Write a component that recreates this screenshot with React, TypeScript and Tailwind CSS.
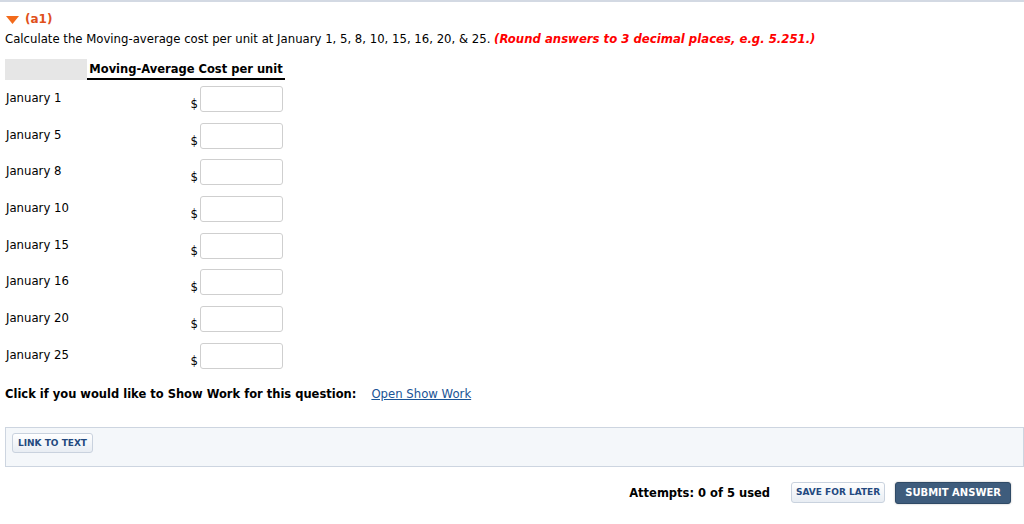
const dates = ['January 1', 'January 5', 'January 8', 'January 10', 'January 15', 'January 16', 'January 20', 'January 25'];

function Row({ label }: { label: string }) {
  return (
    <div className="flex h-[36.7px] items-start">
      <div className="w-[82px] pt-[11px] pl-[1px] text-[11.7px] leading-[14px] text-black">{label}</div>
      <div className="flex flex-1 items-end justify-end pt-[6px] pr-[2px]">
        <span className="mr-[2px] mb-[1px] text-[11.7px] leading-[14px] text-black">$</span>
        <div className="h-[26px] w-[83px] rounded-[3px] border border-[#cfcfcf] bg-white" />
      </div>
    </div>
  );
}

export default function App() {
  return (
    <div className="h-[524px] w-[1024px] overflow-hidden bg-white font-['DejaVu_Sans',Verdana,sans-serif] text-[11.7px] text-black">
      <div className="h-[2px] w-full bg-[#d3d9e3]" />
      <div className="flex items-center pl-[6px] pt-[10px]">
        <svg width="13" height="8" viewBox="0 0 13 8" className="mt-[1px]">
          <polygon points="0,0 13,0 6.5,8" fill="#f26a1b" />
        </svg>
        <span className="ml-[6px] text-[12px] font-bold leading-[14px] text-[#e0501b]">(a1)</span>
      </div>
      <div className="mt-[6px] whitespace-nowrap pl-[5px] text-[11.7px] leading-[14px]">
        Calculate the Moving-average cost per unit at January 1, 5, 8, 10, 15, 16, 20, &amp; 25.{' '}
        <span className="font-bold italic text-[#ff0000]">(Round answers to 3 decimal places, e.g. 5.251.)</span>
      </div>

      <div className="ml-[5px] mt-[13px] w-[280px]">
        <div className="flex h-[21px]">
          <div className="w-[82px] bg-[#e6e6e6]" />
          <div className="flex flex-1 items-center justify-center whitespace-nowrap border-b-2 border-black bg-white text-[11.5px] font-bold leading-[14px]">
            Moving-Average Cost per unit
          </div>
        </div>
        {dates.map((d) => (
          <Row key={d} label={d} />
        ))}
      </div>

      <div className="mt-[13px] flex items-center pl-[5px] text-[11.5px] leading-[14px]">
        <span className="font-bold">Click if you would like to Show Work for this question:</span>
        <a className="ml-[15px] text-[11.7px] text-[#1a5496] underline" href="#">Open Show Work</a>
      </div>

      <div className="ml-[5px] mt-[26px] h-[40px] border border-[#cdd5e0] bg-[#f4f7fa] pl-[6px] pt-[5px]">
        <button className="h-[20px] rounded-[3px] border border-[#c9d2de] bg-gradient-to-b from-white to-[#e8edf3] px-[5px] text-[9px] font-bold leading-[18px] text-[#23497f]">
          LINK TO TEXT
        </button>
      </div>

      <div className="mt-[15px] flex items-center justify-end pr-[13px]">
        <span className="text-[11.5px] font-bold leading-[14px]">Attempts: 0 of 5 used</span>
        <button className="ml-[21px] h-[21px] rounded-[3px] border border-[#c9d2de] bg-gradient-to-b from-white to-[#e8edf3] px-[4px] text-[9px] font-bold leading-[19px] text-[#23497f]">
          SAVE FOR LATER
        </button>
        <button className="ml-[10px] h-[22px] rounded-[3px] border border-[#2f4a66] bg-[#3e5c7c] px-[9px] text-[10px] font-bold leading-[20px] text-white shadow-[0_0_2px_rgba(0,0,0,0.3)]">
          SUBMIT ANSWER
        </button>
      </div>
    </div>
  );
}
